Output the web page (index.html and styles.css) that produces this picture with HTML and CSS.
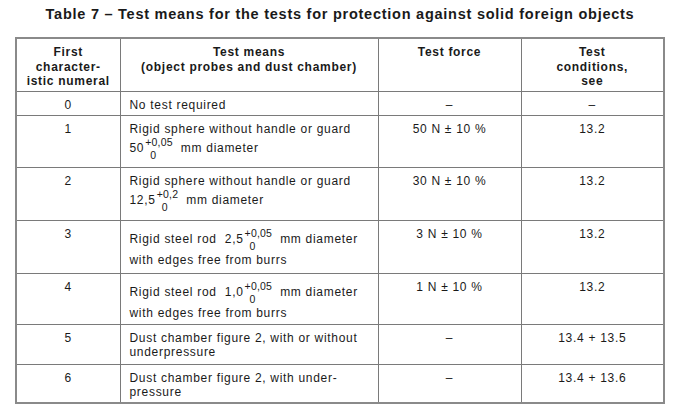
FILE: index.html
```html
<!DOCTYPE html>
<html>
<head>
<meta charset="utf-8">
<link rel="stylesheet" href="styles.css">
</head>
<body>
<div class="page">
<h1 class="title">Table 7 – Test means for the tests for protection against solid foreign objects</h1>
<table class="tbl">
<colgroup><col class="c1"><col class="c2"><col class="c3"><col class="c4"></colgroup>
<thead>
<tr class="rh">
<th>First<br>character-<br>istic numeral</th>
<th>Test means<br>(object probes and dust chamber)</th>
<th>Test force</th>
<th>Test<br>conditions,<br>see</th>
</tr>
</thead>
<tbody>
<tr class="r0"><td class="num">0</td><td class="txt">No test required</td><td class="num">–</td><td class="num">–</td></tr>
<tr class="r1"><td class="num">1</td><td class="txt">Rigid sphere without handle or guard<br>50<span class="tol"><span class="up">+0,05</span><span class="dn">0</span></span> mm diameter</td><td class="num">50 N ± 10 %</td><td class="num">13.2</td></tr>
<tr class="r2"><td class="num">2</td><td class="txt">Rigid sphere without handle or guard<br>12,5<span class="tol"><span class="up">+0,2</span><span class="dn">0</span></span> mm diameter</td><td class="num">30 N ± 10 %</td><td class="num">13.2</td></tr>
<tr class="r3"><td class="num">3</td><td class="txt">Rigid steel rod &nbsp;2,5<span class="tol"><span class="up">+0,05</span><span class="dn">0</span></span> mm diameter<br>with edges free from burrs</td><td class="num">3 N ± 10 %</td><td class="num">13.2</td></tr>
<tr class="r4"><td class="num">4</td><td class="txt">Rigid steel rod &nbsp;1,0<span class="tol"><span class="up">+0,05</span><span class="dn">0</span></span> mm diameter<br>with edges free from burrs</td><td class="num">1 N ± 10 %</td><td class="num">13.2</td></tr>
<tr class="r5"><td class="num">5</td><td class="txt">Dust chamber figure 2, with or without<br>underpressure</td><td class="num">–</td><td class="num">13.4 + 13.5</td></tr>
<tr class="r6"><td class="num">6</td><td class="txt">Dust chamber figure 2, with under-<br>pressure</td><td class="num">–</td><td class="num">13.4 + 13.6</td></tr>
</tbody>
</table>
</div>
</body>
</html>
```
FILE: styles.css
```css
html, body {
  margin: 0;
  padding: 0;
  background: #ffffff;
}
.page {
  font-family: "Liberation Sans", Arial, sans-serif;
  color: #1a1a1a;
  padding-top: 5px;
}
.title {
  margin: 0;
  font-size: 14.5px;
  font-weight: bold;
  letter-spacing: 0.75px;
  text-align: center;
  line-height: 18px;
  height: 32px;
}
.tbl {
  border-collapse: collapse;
  margin-left: 15px;
  width: 648px;
  table-layout: fixed;
  font-size: 12px;
  letter-spacing: 0.7px;
  line-height: 14.5px;
  border: 2px solid #8a8a8a;
}
.c1 { width: 104px; }
.c2 { width: 258px; }
.c3 { width: 143px; }
.c4 { width: 143px; }
.tbl th, .tbl td {
  border: 1.5px solid #7a7a7a;
  vertical-align: top;
  padding: 6px 4px 0 4px;
}
.tbl th {
  font-weight: bold;
  text-align: center;
}
.num { text-align: center; }
.txt { text-align: left; padding-left: 9px !important; }
.rh { height: 53px; }
.r0 { height: 24px; }
.r1 { height: 52px; }
.r2 { height: 53px; }
.r3 { height: 53px; }
.r4 { height: 51px; }
.r5 { height: 40px; }
.r6 { height: 39px; }
.tol {
  display: inline-flex;
  flex-direction: column;
  vertical-align: middle;
  font-size: 10.5px;
  line-height: 13px;
  letter-spacing: 0.2px;
  margin: 0 4px 0 1px;
}
.up { display: block; }
.dn { display: block; padding-left: 5px; }
```
